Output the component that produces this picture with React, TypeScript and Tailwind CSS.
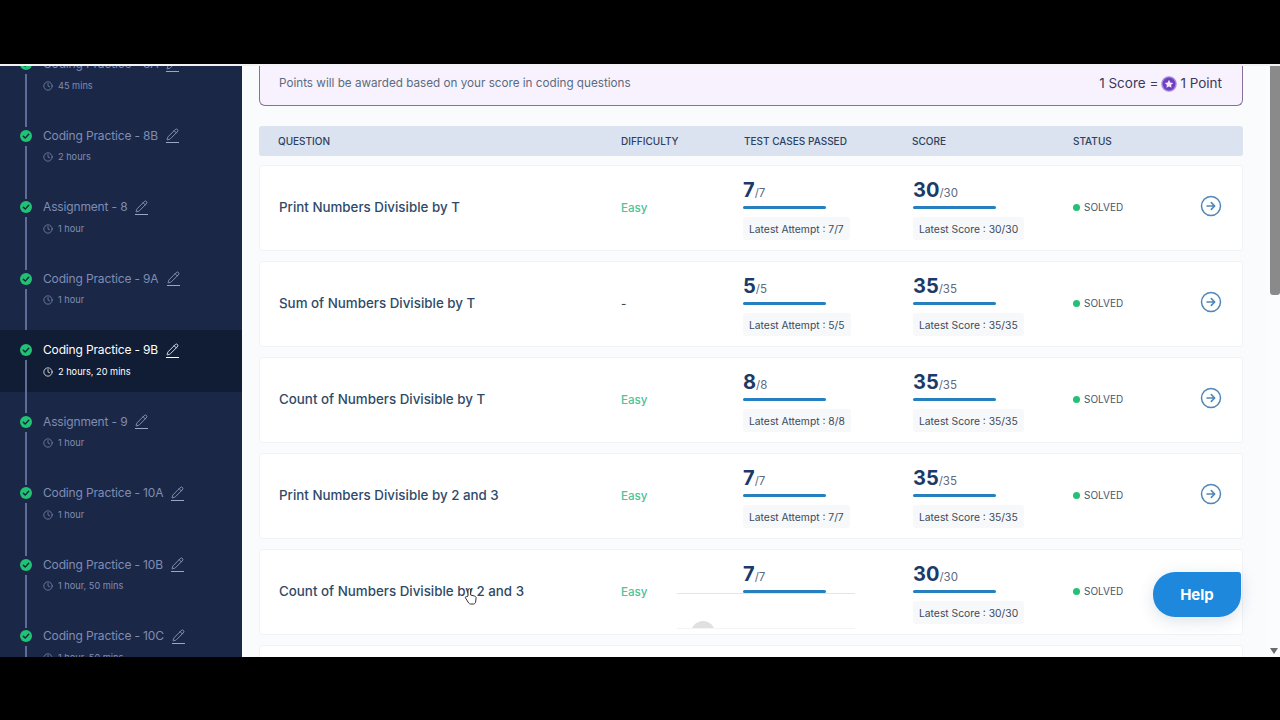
import React from 'react';
import { Clock, Pencil } from 'lucide-react';

const lessons = [
  { title: 'Coding Practice - 8A', time: '45 mins' },
  { title: 'Coding Practice - 8B', time: '2 hours' },
  { title: 'Assignment - 8', time: '1 hour' },
  { title: 'Coding Practice - 9A', time: '1 hour' },
  { title: 'Coding Practice - 9B', time: '2 hours, 20 mins', active: true },
  { title: 'Assignment - 9', time: '1 hour' },
  { title: 'Coding Practice - 10A', time: '1 hour' },
  { title: 'Coding Practice - 10B', time: '1 hour, 50 mins' },
  { title: 'Coding Practice - 10C', time: '1 hour, 50 mins' },
];

const questions = [
  { name: 'Print Numbers Divisible by T', difficulty: 'Easy', passed: 7, total: 7, score: 30, max: 30 },
  { name: 'Sum of Numbers Divisible by T', difficulty: '-', passed: 5, total: 5, score: 35, max: 35 },
  { name: 'Count of Numbers Divisible by T', difficulty: 'Easy', passed: 8, total: 8, score: 35, max: 35 },
  { name: 'Print Numbers Divisible by 2 and 3', difficulty: 'Easy', passed: 7, total: 7, score: 35, max: 35 },
  { name: 'Count of Numbers Divisible by 2 and 3', difficulty: 'Easy', passed: 7, total: 7, score: 30, max: 30, tooltip: true },
];

function CheckDot() {
  return (
    <svg width="12" height="12" viewBox="0 0 12 12" className="shrink-0">
      <circle cx="6" cy="6" r="6" fill="#22c274" />
      <path d="M3.3 6.2l1.9 1.9 3.5-3.9" fill="none" stroke="#10233f" strokeWidth="1.4" strokeLinecap="round" strokeLinejoin="round" />
    </svg>
  );
}

function EditIcon({ active }: { active?: boolean }) {
  return (
    <span className={`ml-[8px] flex h-[15px] w-[13px] flex-col items-center ${active ? 'text-white' : 'text-[#9aa6c4]'}`}>
      <Pencil className="h-[13px] w-[13px]" strokeWidth={1.5} />
      <span className="mt-[1px] h-px w-[13px] shrink-0 bg-current" />
    </span>
  );
}

function LessonRow({ title, time, active }: { title: string; time: string; active?: boolean }) {
  return (
    <div className="relative h-[71.5px]">
      <div className={`flex h-[62px] items-start pl-[20px] pt-[12px] ${active ? 'bg-[#111c35]' : ''}`}>
        <div className="mt-[2px] w-[23px]">
          <CheckDot />
        </div>
        <div>
          <div className="flex h-[16.5px] items-center">
            <span className={`text-[12px] leading-[16.5px] tracking-[-0.15px] ${active ? 'text-white' : 'text-[#7f8db3]'}`}>{title}</span>
            <EditIcon active={active} />
          </div>
          <div className={`mt-[5px] flex h-[16px] items-center gap-[5px] text-[9.2px] ${active ? 'text-white' : 'text-[#7f8db3]'}`}>
            <Clock className="h-[10px] w-[10px]" strokeWidth={1.8} />
            <span className="leading-none">{time}</span>
          </div>
        </div>
      </div>
      <span className="absolute left-[25px] top-[30px] h-[53px] w-[2px] bg-[#5e6d96]" />
    </div>
  );
}

function Metric({ value, total, width, label }: { value: number; total: number; width: string; label: string }) {
  return (
    <div className={`mt-[2px] flex flex-col items-start ${width}`}>
      <div className="flex h-[22px] items-baseline text-[#1b3a68]">
        <span className="text-[20px] font-bold leading-[22px]">{value}</span>
        <span className="text-[11.5px] text-[#5c6a7e]">/{total}</span>
      </div>
      <div className="mt-[5px] h-[3px] w-[83px] rounded-full bg-[#2680bf]" />
      <div className="mt-[8px] h-[23px] rounded-[3px] bg-[#f6f8fa] px-[6px] pt-[1px] text-[10.3px] leading-[23px] text-[#3d4a5c]">{label}</div>
    </div>
  );
}

function QuestionRow({ q }: { q: (typeof questions)[number] }) {
  return (
    <div className="relative flex h-[86px] shrink-0 items-center rounded-[3px] border border-[#f0f3f7] bg-white pl-[19px]">
      <div className="-mt-[1px] w-[342px] text-[13.35px] font-medium text-[#2f4a68]">{q.name}</div>
      <div className={`mt-[1px] w-[122px] text-[11.6px] font-medium ${q.difficulty === 'Easy' ? 'text-[#4cc398]' : 'text-[#3d4a5c]'}`}>{q.difficulty}</div>
      <Metric value={q.passed} total={q.total} width="w-[170px]" label={`Latest Attempt : ${q.passed}/${q.total}`} />
      <Metric value={q.score} total={q.max} width="w-[160px]" label={`Latest Score : ${q.score}/${q.max}`} />
      <div className="-mt-[1px] flex w-[127px] items-center gap-[4px] text-[10px] text-[#4a5568]">
        <span className="h-[7px] w-[7px] rounded-full bg-[#22c274]" />
        SOLVED
      </div>
      <svg width="22" height="22" viewBox="0 0 22 22" fill="none" stroke="#4f87b8" className="-mt-[4px]">
        <circle cx="11" cy="11" r="9.5" strokeWidth="1.5" />
        <path d="M7 11h7.5M11.3 7.600l3.400 3.400-3.400 3.400" strokeWidth="1.6" strokeLinecap="round" strokeLinejoin="round" />
      </svg>
      {q.tooltip && (
        <div className="absolute left-[417px] top-[43px] h-[36px] w-[178px] overflow-hidden border-y border-t-[#e2e5ea] border-b-[#f3f4f6] bg-white">
          <span className="absolute left-[14px] top-[27px] h-[24px] w-[24px] rounded-full bg-[#e0e0e0]" />
        </div>
      )}
    </div>
  );
}

export default function App() {
  return (
    <div className="flex h-[720px] w-[1280px] flex-col overflow-hidden bg-black font-['Inter','Liberation_Sans',sans-serif]">
      <div className="h-[64px] shrink-0" />
      <div className="flex h-[593px] shrink-0 flex-col overflow-hidden bg-white">
        <div className="h-[2px] shrink-0 bg-[#f2f2f2]" />
        <div className="flex min-h-0 flex-1">
          <aside className="w-[242px] shrink-0 overflow-hidden bg-[#1a2747]">
            <div className="-mt-[22px]">
              {lessons.map((l) => (
                <LessonRow key={l.title} title={l.title} time={l.time} active={l.active} />
              ))}
            </div>
          </aside>
          <main className="flex min-w-0 flex-1 flex-col overflow-hidden bg-[#f9fbfd] pl-[17px] pr-[23px]">
            <div className="flex h-[40px] shrink-0 items-center justify-between rounded-b-[6px] border border-t-0 border-[#8a6f9c] bg-[#f7f2fd] pb-[4px] pl-[19px] pr-[20px]">
              <span className="text-[11.7px] text-[#5b6b80]">Points will be awarded based on your score in coding questions</span>
              <span className="flex items-center text-[13.5px] text-[#3b3a5c]">
                1 Score =
                <svg width="16" height="16" viewBox="0 0 16 16" className="mx-[3px]">
                  <circle cx="8" cy="8" r="7.8" fill="#a78bdc" />
                  <circle cx="8" cy="8" r="6.4" fill="#6d3fc0" />
                  <path d="M8 3.800l1.300 2.700 2.900.4-2.100 2 .5 2.900L8 10.400l-2.600 1.400.5-2.900-2.100-2 2.900-.4z" fill="#f1e6fb" />
                </svg>
                1 Point
              </span>
            </div>
            <div className="mt-[20px] flex h-[30px] shrink-0 items-center rounded-[3px] bg-[#dbe3f0] pl-[19px] pt-[1px] text-[10px] font-medium uppercase text-[#2c4060]">
              <span className="w-[343px]">Question</span>
              <span className="w-[123px]">Difficulty</span>
              <span className="w-[168px]">Test Cases Passed</span>
              <span className="w-[161px]">Score</span>
              <span>Status</span>
            </div>
            <div className="mt-[9px] flex flex-col gap-[10px]">
              {questions.map((q) => (
                <QuestionRow key={q.name} q={q} />
              ))}
              <div className="h-[86px] shrink-0 rounded-[3px] border border-[#f0f3f7] bg-white" />
            </div>
          </main>
          <div className="flex w-[14px] shrink-0 flex-col items-end bg-[#fbfcfd]">
            <div className="h-[229px] w-[10px] rounded-b-[3px] bg-[#8a8a8a]" />
            <div className="flex-1" />
            <div className="mb-[3px] mr-[2px] h-0 w-0 border-x-[4px] border-t-[6px] border-x-transparent border-t-[#6b6b6b]" />
          </div>
        </div>
      </div>
      <div className="flex-1" />
      <button className="absolute left-[1153px] top-[572px] flex h-[45px] w-[88px] items-center justify-center rounded-[22px] rounded-tr-[3px] bg-[#1e88dc] pt-[1px] text-[15px] font-bold text-white shadow-[0_4px_16px_rgba(30,60,100,0.15)]">
        Help
      </button>
      <svg width="16" height="20" viewBox="0 0 16 20" className="absolute left-[463px] top-[587px]" fill="#fff" stroke="#333" strokeWidth="1">
        <path d="M5 9V3a1.300 1.300 0 012.600 0v5l4 1c1 .3 1.600 1 1.500 2l-.5 4c-.2 1-1 2-2 2H7.500c-.8 0-1.400-.4-1.800-1L2.500 11c-.6-1 .6-2 1.500-1.200z" />
      </svg>
    </div>
  );
}
